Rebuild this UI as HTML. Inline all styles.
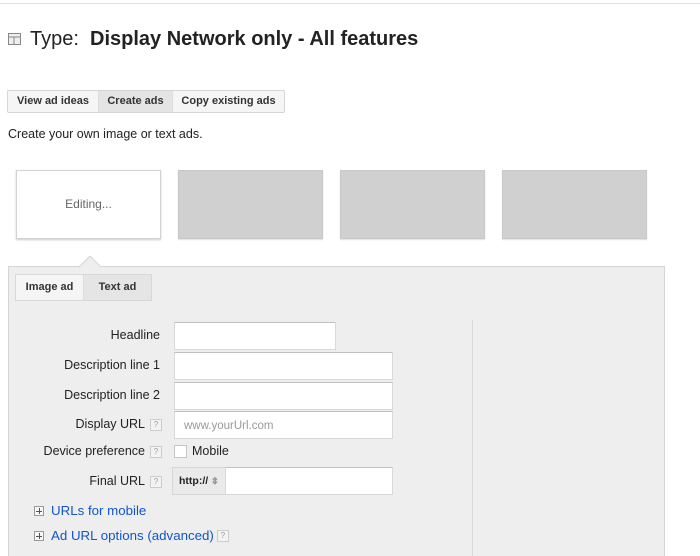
<!DOCTYPE html>
<html><head><style>
*{margin:0;padding:0;box-sizing:border-box}
html,body{width:700px;height:556px;overflow:hidden}
body{background:#fff;font-family:"Liberation Sans",Arial,sans-serif;color:#222;position:relative}
.a{position:absolute}
.lbl{position:absolute;font-size:12.5px;color:#222;text-align:right;right:540px;white-space:nowrap}
.inp{position:absolute;background:#fff;border:1px solid #d9d9d9;border-top-color:#c0c0c0}
.q{display:inline-block;width:12px;height:12px;border:1px solid #ccc;background:#f3f3f3;color:#999;font-size:8px;line-height:10px;text-align:center;vertical-align:middle;margin-left:5px}
.plus{position:absolute;width:10px;height:10px;border:1px solid #999;background:#f7f7f7}
.plus:before{content:"";position:absolute;left:1px;top:3.5px;width:6px;height:1px;background:#555}
.plus:after{content:"";position:absolute;left:3.5px;top:1px;width:1px;height:6px;background:#555}
.link{position:absolute;font-size:13.3px;color:#1155cc}
.thumb{position:absolute;top:170px;width:145px;height:69px;background:#d0d0d0;border:1px solid #c8c8c8;box-shadow:0 1px 1px rgba(0,0,0,.12)}
</style></head><body>
<div class="a" style="left:0;top:3px;width:700px;height:1px;background:#e0e0e0"></div>
<svg class="a" style="left:8px;top:33px" width="13" height="12"><rect x="0.5" y="0.5" width="12" height="11" fill="#eee" stroke="#888"/><line x1="0.5" y1="4" x2="12.5" y2="4" stroke="#888"/><line x1="6" y1="4" x2="6" y2="11.5" stroke="#888"/></svg>
<div class="a" style="left:30px;top:28px;font-size:20px;white-space:nowrap">Type:&nbsp; <b>Display Network only - All features</b></div>
<div class="a" style="left:7px;top:90px;height:23px;border:1px solid #d6d6d6;border-radius:2px;display:flex;font-size:11px;font-weight:bold;color:#333;background:#f5f5f5">
<div style="width:91px;text-align:center;line-height:21px;border-right:1px solid #ddd">View ad ideas</div>
<div style="width:74px;text-align:center;line-height:21px;background:#e4e4e4;border-right:1px solid #ddd">Create ads</div>
<div style="width:111px;text-align:center;line-height:21px">Copy existing ads</div></div>
<div class="a" style="left:8px;top:127px;font-size:12.5px">Create your own image or text ads.</div>
<div class="thumb" style="left:16px;background:#fff;border-color:#d3d3d3;box-shadow:0 1px 2px rgba(0,0,0,.2);font-size:12px;color:#666;text-align:center;line-height:67px">Editing...</div>
<div class="thumb" style="left:178px"></div>
<div class="thumb" style="left:340px"></div>
<div class="thumb" style="left:502px"></div>
<div class="a" style="left:8px;top:266px;width:657px;height:300px;background:#eee;border:1px solid #d4d4d4"></div>
<svg class="a" style="left:79px;top:256px" width="22" height="12"><polygon points="0,11 11,0 22,11" fill="#eee" stroke="#d4d4d4"/><rect x="1" y="10.5" width="20" height="2" fill="#eee"/></svg>
<div class="a" style="left:15px;top:274px;height:27px;border:1px solid #d8d8d8;display:flex;font-size:11px;font-weight:bold;color:#333">
<div style="width:68px;text-align:center;line-height:25px;background:#f5f5f5;border-right:1px solid #ddd">Image ad</div>
<div style="width:67px;text-align:center;line-height:25px;background:#e5e5e5">Text ad</div></div>
<div class="a" style="left:472px;top:320px;width:1px;height:240px;background:#d8d8d8"></div>
<div class="lbl" style="top:328px">Headline</div>
<div class="inp" style="left:174px;top:322px;width:162px;height:28px"></div>
<div class="lbl" style="top:358px">Description line 1</div>
<div class="inp" style="left:174px;top:352px;width:219px;height:28px"></div>
<div class="lbl" style="top:388px">Description line 2</div>
<div class="inp" style="left:174px;top:382px;width:219px;height:28px"></div>
<div class="lbl" style="top:417px;right:538px">Display URL<span class="q">?</span></div>
<div class="inp" style="left:174px;top:411px;width:219px;height:28px;font-size:11.5px;color:#999;padding:8px 0 0 9px">www.yourUrl.com</div>
<div class="lbl" style="top:444px;right:538px">Device preference<span class="q">?</span></div>
<div class="a" style="left:174px;top:445px;width:13px;height:13px;background:#fff;border:1px solid #c6c6c6"></div>
<div class="a" style="left:192px;top:444px;font-size:12.5px">Mobile</div>
<div class="lbl" style="top:474px;right:538px">Final URL<span class="q">?</span></div>
<div class="a" style="left:172px;top:467px;width:54px;height:28px;background:#eaeaea;border:1px solid #d6d6d6;font-size:10.5px;font-weight:bold;padding:7px 0 0 6px">http:// <span style="color:#777;font-size:9px">&#8691;</span></div>
<div class="inp" style="left:225px;top:467px;width:168px;height:28px"></div>
<div class="plus" style="left:34px;top:506px"></div>
<div class="link" style="left:51px;top:503px">URLs for mobile</div>
<div class="plus" style="left:34px;top:531px"></div>
<div class="link" style="left:51px;top:528px">Ad URL options (advanced)<span class="q" style="margin-left:3px">?</span></div>
</body></html>
